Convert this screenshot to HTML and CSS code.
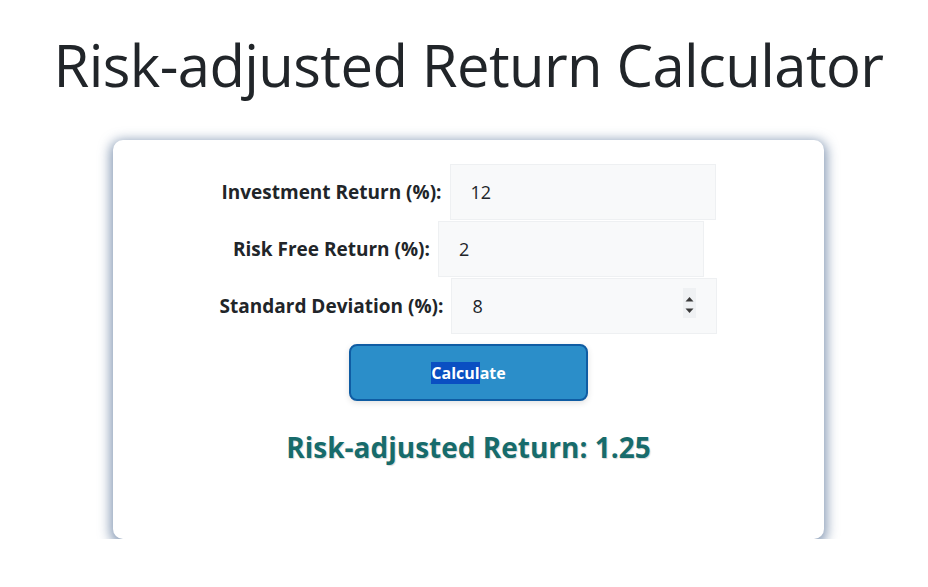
FILE: index.html
```html
<!DOCTYPE html>
<html>

<head>
    <title>Risk-adjusted Return Calculator</title>
    <meta charset="utf-8">
    <meta name="viewport" content="width=device-width, initial-scale=1.0">
    <link rel="stylesheet" href="styles.css">
</head>

<body>

    <h1>Risk-adjusted Return Calculator</h1>

    <section class="kort">
        <div class="raekke">
            <label for="afkast">Investment Return (%):</label>
            <input type="text" id="afkast" value="12">
        </div>
        <div class="raekke">
            <label for="risikofri">Risk Free Return (%):</label>
            <input type="text" id="risikofri" value="2">
        </div>
        <div class="raekke">
            <label for="afvigelse">Standard Deviation (%):</label>
            <div class="talfelt">
                <input type="text" id="afvigelse" value="8">
                <span class="pile">
                    <svg width="13" height="30" viewBox="0 0 13 30">
                        <path d="M6.5 9 L10.5 13.5 L2.5 13.5 Z" fill="#3a3a3a"/>
                        <path d="M2.5 20.5 L10.5 20.5 L6.5 25 Z" fill="#3a3a3a"/>
                    </svg>
                </span>
            </div>
        </div>
        <button class="beregn"><span class="markeret">Calcul</span>ate</button>
        <h2 class="resultat">Risk-adjusted Return: 1.25</h2>
    </section>

</body>

</html>
```

FILE: styles.css
```css
body {
    margin: 0;
    padding-left: 9px;
    font-family: "Open Sans", "Noto Sans", sans-serif;
    color: #212529;
    background: #ffffff;
}

h1 {
    margin: 25px 0 0;
    height: 115px;
    font-size: 58px;
    font-weight: 400;
    line-height: 80px;
    text-align: center;
    letter-spacing: -0.6px;
}

.kort {
    width: 711px;
    height: 399px;
    box-sizing: border-box;
    margin: 0 auto;
    padding: 24px 0 0;
    background: #ffffff;
    border-radius: 10px;
    box-shadow: 0 3px 12px 3px rgba(75, 105, 145, 0.65);
    text-align: center;
}

.raekke {
    display: flex;
    justify-content: center;
    align-items: center;
    gap: 8px;
    margin-bottom: 1px;
}

label {
    font-size: 19px;
    font-weight: 700;
}

.talfelt {
    position: relative;
}

input {
    width: 266px;
    height: 56px;
    box-sizing: border-box;
    padding: 0 20px;
    font-family: inherit;
    font-size: 18px;
    color: #212529;
    background: #f8f9fa;
    border: 1px solid #eef0f2;
    border-radius: 0;
    outline: none;
}

.pile {
    position: absolute;
    top: 10px;
    right: 21px;
    display: block;
    width: 13px;
    height: 30px;
    background: #eff1f3;
}

.pile svg {
    display: block;
}

.beregn {
    display: block;
    width: 239px;
    height: 57px;
    margin: 10px auto 0;
    font-family: inherit;
    font-size: 16px;
    font-weight: 700;
    color: #ffffff;
    background: #2b8ec9;
    border: 2px solid #0f5ca3;
    border-radius: 8px;
    box-shadow: 0 2px 6px rgba(0, 0, 0, 0.12);
}

.markeret {
    background: #0a4fc2;
}

.resultat {
    margin: 27px 0 0;
    font-size: 28px;
    font-weight: 700;
    color: #176b6b;
    text-shadow: 1px 1px 1px rgba(0, 0, 0, 0.15);
}
```
